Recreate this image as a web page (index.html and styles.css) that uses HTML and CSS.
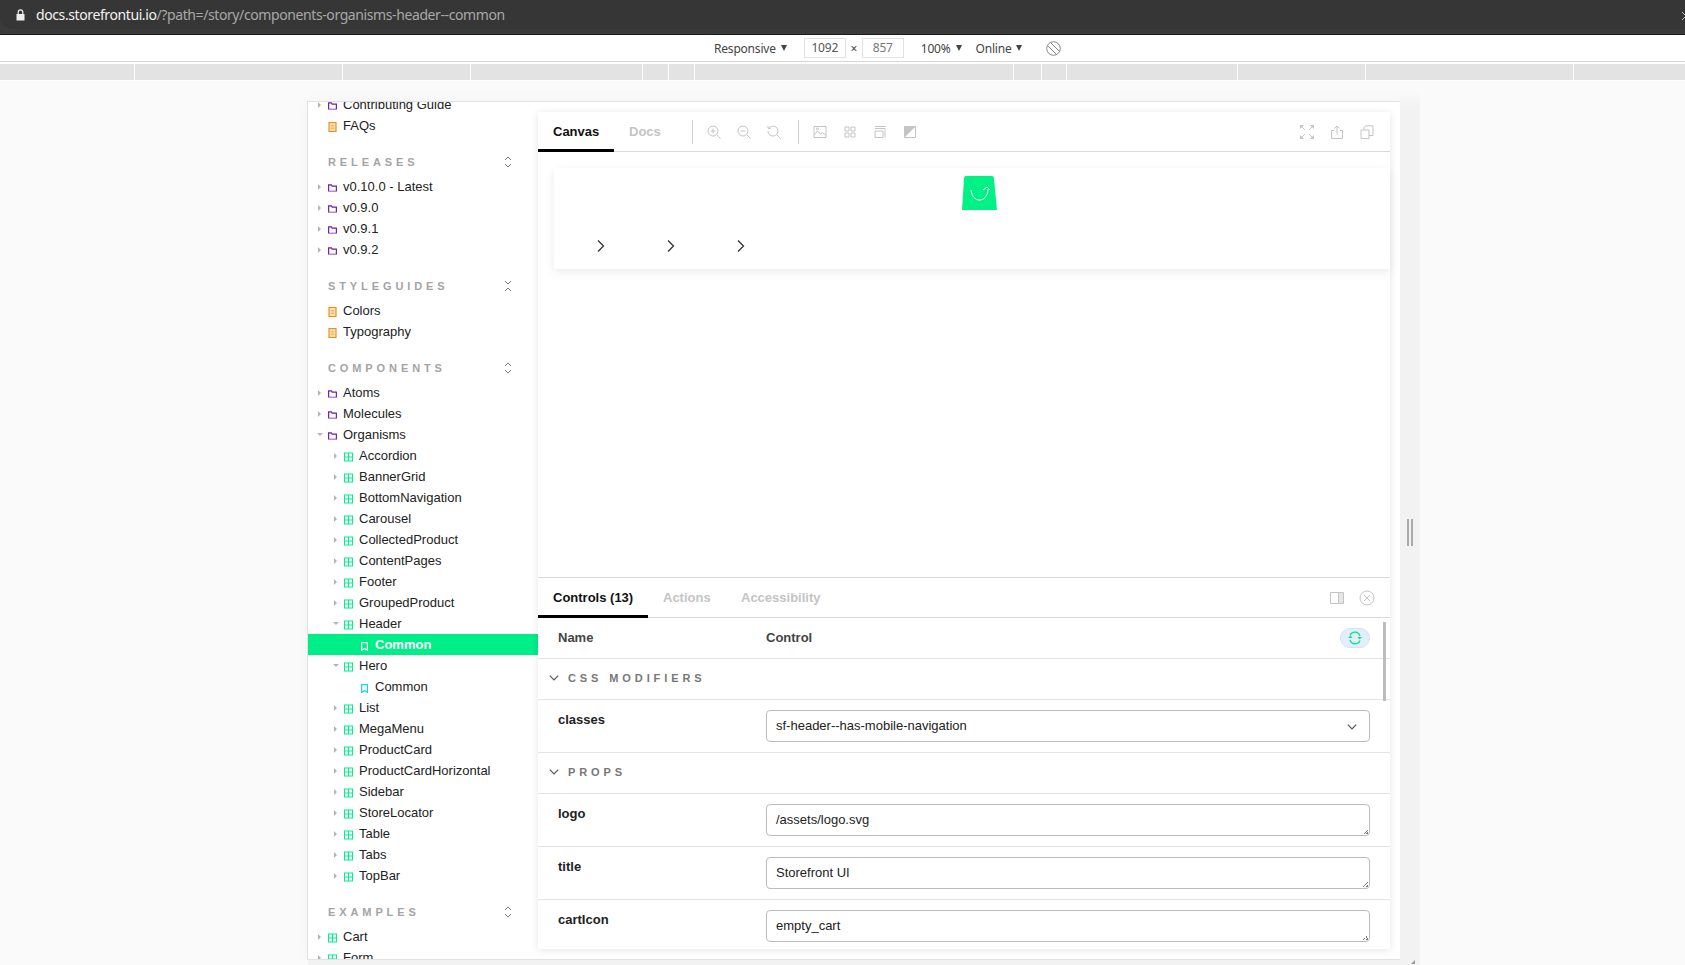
FILE: index.html
```html
<!DOCTYPE html>
<html lang="en">
<head>
    <meta charset="UTF-8">
    <title>Storefront UI docs</title>
    <link rel="stylesheet" href="styles.css">
</head>
<body>
    <svg class="sprites" width="0" height="0">
        <symbol id="i-folder" viewBox="0 0 10 9"><path d="M.7 1h3l1 1.4h4.6v5.9H.7z" fill="none" stroke="#6f1aa8" stroke-width="1.3"/><path d="M0 8h10v1H0z" fill="#c69fe0"/></symbol>
        <symbol id="i-doc" viewBox="0 0 9 11"><path d="M.7.7h7.600v9.600H.7z" fill="#fff" stroke="#fb8a0a" stroke-width="1.400"/><path d="M2.200 3.500h4.600M2.200 5.500h4.600M2.200 7.500h4.600" stroke="#fb8a0a"/></symbol>
        <symbol id="i-comp" viewBox="0 0 9 9"><path d="M.5.5h8v8h-8zM4.500.5v8M.5 4.500h8" fill="none" stroke="#00f08a" stroke-width="1.100"/></symbol>
        <symbol id="i-mark" viewBox="0 0 7 9"><path d="M.6.6h5.800v7.800L3.500 6.400.6 8.400z" fill="none" stroke="currentColor" stroke-width="1.200"/></symbol>
        <symbol id="i-updown" viewBox="0 0 8 12"><path d="M1 4l3-3 3 3M1 8l3 3 3-3" fill="none" stroke="#777" stroke-width="1"/></symbol>
        <symbol id="i-inward" viewBox="0 0 8 12"><path d="M1 1l3 3 3-3M1 11l3-3 3 3" fill="none" stroke="#777" stroke-width="1"/></symbol>
        <symbol id="i-chev" viewBox="0 0 8 5"><path d="M.5.5L4 4 7.5.5" fill="none" stroke="#555" stroke-width="1"/></symbol>
    </svg>

    <div class="browser-bar">
        <div class="address">
            <svg class="lock" width="9" height="12" viewBox="0 0 9 12"><path d="M2.200 5V3.200a2.300 2.300 0 0 1 4.600 0V5" fill="none" stroke="#eee" stroke-width="1.200"/><path d="M.5 5h8v6.500h-8z" fill="#eee"/></svg>
            <span class="host">docs.storefrontui.io</span><span class="path">/?path=/story/components-organisms-header--common</span>
            <svg class="edge-icon" width="3" height="8" viewBox="0 0 3 8"><path d="M0 0l3 3M0 8l3-3" stroke="#bbb" fill="none"/></svg>
        </div>
    </div>

    <div class="device-bar">
        <span class="device-opt">Responsive <i class="caret"></i></span>
        <span class="size-box">1092</span>
        <span class="times">×</span>
        <span class="size-box muted">857</span>
        <span class="device-opt zoom-opt">100% <i class="caret"></i></span>
        <span class="device-opt net-opt">Online <i class="caret"></i></span>
        <svg class="rotate" width="15" height="15" viewBox="0 0 15 15"><circle cx="7.500" cy="7.500" r="6.800" fill="none" stroke="#888"/><path d="M5 2l8 8M2 5l8 8" stroke="#888" fill="none" stroke-width="1"/></svg>
    </div>

    <div class="ruler">
        <span style="width:135px"></span><span style="width:208px"></span><span style="width:128px"></span><span style="width:172px"></span><span style="width:26px"></span><span style="width:26px"></span><span style="width:319px"></span><span style="width:28px"></span><span style="width:25px"></span><span style="width:171px"></span><span style="width:128px"></span><span style="width:208px"></span><span class="ruler-end"></span>
    </div>

    <div class="stage">
        <div class="frame">
            <nav class="sidebar">
                <ul class="tree first">
                    <li><i class="arrow"></i><svg class="ic"><use href="#i-folder"/></svg>Contributing Guide</li>
                    <li><i class="arrow none"></i><svg class="ic"><use href="#i-doc"/></svg>FAQs</li>
                </ul>

                <div class="section"><span>RELEASES</span><svg class="toggle"><use href="#i-updown"/></svg></div>
                <ul class="tree">
                    <li><i class="arrow"></i><svg class="ic"><use href="#i-folder"/></svg>v0.10.0 - Latest</li>
                    <li><i class="arrow"></i><svg class="ic"><use href="#i-folder"/></svg>v0.9.0</li>
                    <li><i class="arrow"></i><svg class="ic"><use href="#i-folder"/></svg>v0.9.1</li>
                    <li><i class="arrow"></i><svg class="ic"><use href="#i-folder"/></svg>v0.9.2</li>
                </ul>

                <div class="section"><span>STYLEGUIDES</span><svg class="toggle"><use href="#i-inward"/></svg></div>
                <ul class="tree">
                    <li><i class="arrow none"></i><svg class="ic"><use href="#i-doc"/></svg>Colors</li>
                    <li><i class="arrow none"></i><svg class="ic"><use href="#i-doc"/></svg>Typography</li>
                </ul>

                <div class="section"><span>COMPONENTS</span><svg class="toggle"><use href="#i-updown"/></svg></div>
                <ul class="tree">
                    <li><i class="arrow"></i><svg class="ic"><use href="#i-folder"/></svg>Atoms</li>
                    <li><i class="arrow"></i><svg class="ic"><use href="#i-folder"/></svg>Molecules</li>
                    <li><i class="arrow open"></i><svg class="ic"><use href="#i-folder"/></svg>Organisms</li>
                    <li class="sub"><i class="arrow"></i><svg class="ic"><use href="#i-comp"/></svg>Accordion</li>
                    <li class="sub"><i class="arrow"></i><svg class="ic"><use href="#i-comp"/></svg>BannerGrid</li>
                    <li class="sub"><i class="arrow"></i><svg class="ic"><use href="#i-comp"/></svg>BottomNavigation</li>
                    <li class="sub"><i class="arrow"></i><svg class="ic"><use href="#i-comp"/></svg>Carousel</li>
                    <li class="sub"><i class="arrow"></i><svg class="ic"><use href="#i-comp"/></svg>CollectedProduct</li>
                    <li class="sub"><i class="arrow"></i><svg class="ic"><use href="#i-comp"/></svg>ContentPages</li>
                    <li class="sub"><i class="arrow"></i><svg class="ic"><use href="#i-comp"/></svg>Footer</li>
                    <li class="sub"><i class="arrow"></i><svg class="ic"><use href="#i-comp"/></svg>GroupedProduct</li>
                    <li class="sub"><i class="arrow open"></i><svg class="ic"><use href="#i-comp"/></svg>Header</li>
                    <li class="story active"><svg class="ic mark"><use href="#i-mark"/></svg>Common</li>
                    <li class="sub"><i class="arrow open"></i><svg class="ic"><use href="#i-comp"/></svg>Hero</li>
                    <li class="story"><svg class="ic mark"><use href="#i-mark"/></svg>Common</li>
                    <li class="sub"><i class="arrow"></i><svg class="ic"><use href="#i-comp"/></svg>List</li>
                    <li class="sub"><i class="arrow"></i><svg class="ic"><use href="#i-comp"/></svg>MegaMenu</li>
                    <li class="sub"><i class="arrow"></i><svg class="ic"><use href="#i-comp"/></svg>ProductCard</li>
                    <li class="sub"><i class="arrow"></i><svg class="ic"><use href="#i-comp"/></svg>ProductCardHorizontal</li>
                    <li class="sub"><i class="arrow"></i><svg class="ic"><use href="#i-comp"/></svg>Sidebar</li>
                    <li class="sub"><i class="arrow"></i><svg class="ic"><use href="#i-comp"/></svg>StoreLocator</li>
                    <li class="sub"><i class="arrow"></i><svg class="ic"><use href="#i-comp"/></svg>Table</li>
                    <li class="sub"><i class="arrow"></i><svg class="ic"><use href="#i-comp"/></svg>Tabs</li>
                    <li class="sub"><i class="arrow"></i><svg class="ic"><use href="#i-comp"/></svg>TopBar</li>
                </ul>

                <div class="section"><span>EXAMPLES</span><svg class="toggle"><use href="#i-updown"/></svg></div>
                <ul class="tree">
                    <li><i class="arrow"></i><svg class="ic"><use href="#i-comp"/></svg>Cart</li>
                    <li><i class="arrow"></i><svg class="ic"><use href="#i-comp"/></svg>Form</li>
                </ul>
            </nav>

            <main class="main">
                <div class="toolbar">
                    <div class="tab active canvas-tab">Canvas</div>
                    <div class="tab docs-tab">Docs</div>
                    <i class="tool-sep"></i>
                    <svg class="tool" viewBox="0 0 14 14"><circle cx="6" cy="6" r="5" /><path d="M9.700 9.700L13.500 13.500M3.500 6h5M6 3.500v5"/></svg>
                    <svg class="tool" viewBox="0 0 14 14"><circle cx="6" cy="6" r="5" /><path d="M9.700 9.700L13.500 13.500M3.500 6h5"/></svg>
                    <svg class="tool" viewBox="0 0 14 14"><path d="M2.500 2.500A5 5 0 1 1 1 6M9.700 9.700l3.800 3.800M1 .8v2.500h2.800"/></svg>
                    <i class="tool-sep second"></i>
                    <svg class="tool" viewBox="0 0 14 14"><path d="M1 1.500h12v11H1zM1 10l3.500-4 3 3 2-1.500 3.500 3"/><circle cx="4.500" cy="4" r="1"/></svg>
                    <svg class="tool" viewBox="0 0 14 14"><path d="M2 2h4v4H2zM8 2h4v4H8zM2 8h4v4H2zM8 8h4v4H8z"/></svg>
                    <svg class="tool" viewBox="0 0 14 14"><path d="M2 6h8v6.500H2zM2 3.500h10v9M2 1.500h11"/></svg>
                    <svg class="tool" viewBox="0 0 14 14"><path d="M1.500 1.500h11v11h-11z"/><path d="M1.500 12.500V1.500h11z" class="solid"/></svg>
                    <div class="tool-right">
                        <svg class="tool" viewBox="0 0 14 14"><path d="M1 1l4 4M13 1L9 5M1 13l4-4M13 13L9 9"/><path class="solid" d="M0 0h4L0 4zM14 0v4l-4-4zM0 14v-4l4 4zM14 14h-4l4-4z"/></svg>
                        <svg class="tool" viewBox="0 0 14 14"><path d="M4 5.500H1.500v8h11v-8H10M7 9.500V1M4.500 3.500L7 1l2.500 2.500"/></svg>
                        <svg class="tool" viewBox="0 0 14 14"><path d="M1 5h8v8.500H1zM4 5V2.500L6 .8h7v9.700H9"/></svg>
                    </div>
                </div>

                <div class="preview">
                    <div class="story-card">
                        <div class="bag">
                            <svg width="35" height="34" viewBox="0 0 35 34"><path d="M4 0h26q2 0 2 3l3 31H0L2 3q0-3 2-3z" fill="#00f286"/><path d="M9 14a8 10 0 0 0 17-1M21 14l4-3 3 3" fill="none" stroke="#fff" stroke-width="1"/></svg>
                        </div>
                        <div class="crumbs">
                            <svg width="8" height="12" viewBox="0 0 8 12"><path d="M1 .5L6.500 6 1 11.500" fill="none" stroke="#333" stroke-width="1.300"/></svg>
                            <svg width="8" height="12" viewBox="0 0 8 12"><path d="M1 .5L6.500 6 1 11.500" fill="none" stroke="#333" stroke-width="1.300"/></svg>
                            <svg width="8" height="12" viewBox="0 0 8 12"><path d="M1 .5L6.500 6 1 11.500" fill="none" stroke="#333" stroke-width="1.300"/></svg>
                        </div>
                    </div>
                </div>

                <div class="addons">
                    <div class="toolbar addon-tabs">
                        <div class="tab active controls-tab">Controls (13)</div>
                        <div class="tab actions-tab">Actions</div>
                        <div class="tab">Accessibility</div>
                        <div class="tool-right">
                            <svg class="tool" viewBox="0 0 14 14"><path d="M.5 1.500h13v11H.5zM8.500 1.500v11"/><path class="light" d="M9 2h4v10H9z"/></svg>
                            <svg class="tool close" viewBox="0 0 16 16"><circle cx="8" cy="8" r="7"/><path d="M5 5l6 6M11 5l-6 6"/></svg>
                        </div>
                    </div>

                    <div class="scrollbar"></div>

                    <div class="row head-row">
                        <div class="col-name">Name</div>
                        <div class="col-control">Control</div>
                        <div class="reset">
                            <svg width="14" height="14" viewBox="0 0 14 14"><path d="M12 5a5.300 5.300 0 0 0-10-.5M2 9a5.300 5.300 0 0 0 10 .5" fill="none" stroke="#00e884" stroke-width="1.300"/><path d="M0 7l2.500-2.500L4.500 7zM14 6l-2.500 2.500L9.500 6z" fill="#00e884"/></svg>
                        </div>
                    </div>

                    <div class="row group-row"><svg class="chev"><use href="#i-chev"/></svg><span class="group-title">CSS MODIFIERS</span></div>

                    <div class="row control-row">
                        <div class="col-name prop">classes</div>
                        <div class="select">sf-header--has-mobile-navigation<svg class="chev select-chev"><use href="#i-chev"/></svg></div>
                    </div>

                    <div class="row group-row"><svg class="chev"><use href="#i-chev"/></svg><span class="group-title">PROPS</span></div>

                    <div class="row control-row">
                        <div class="col-name prop">logo</div>
                        <div class="textarea">/assets/logo.svg</div>
                    </div>
                    <div class="row control-row">
                        <div class="col-name prop">title</div>
                        <div class="textarea">Storefront UI</div>
                    </div>
                    <div class="row control-row last">
                        <div class="col-name prop">cartIcon</div>
                        <div class="textarea">empty_cart</div>
                    </div>
                </div>
            </main>
        </div>

        <div class="resizer"><i></i><i></i></div>
        <svg class="corner" width="4" height="4" viewBox="0 0 4 4"><path d="M4 0v4H0z" fill="#999"/></svg>
    </div>
</body>
</html>
```

FILE: styles.css
```css
* {
    box-sizing: border-box;
}
html, body {
    margin: 0;
    height: 100%;
    overflow: hidden;
}
body {
    width: 1685px;
    height: 965px;
    font-family: "Liberation Sans", Arial, sans-serif;
    font-size: 13px;
    color: #333;
    background-color: #fafafa;
}
.sprites {
    position: absolute;
}
ul {
    list-style: none;
    margin: 0;
    padding: 0;
}

/* browser chrome */
.browser-bar {
    height: 35px;
    background-color: #3a3a3a;
    border-bottom: 1px solid #1c1c1c;
}
.address {
    height: 29px;
    display: flex;
    align-items: center;
    padding-left: 16px;
    background-color: #363636;
    border-radius: 0 0 0 14px;
    font-family: "Noto Sans", sans-serif;
    font-size: 14px;
    letter-spacing: -0.4px;
    white-space: nowrap;
}
.lock {
    margin-right: 11px;
}
.host {
    color: #f2f2f2;
}
.path {
    color: #a8a8a8;
}
.edge-icon {
    margin-left: auto;
    margin-top: 3px;
}

.device-bar {
    height: 27px;
    background-color: #fff;
    border-bottom: 1px solid #d6d6d6;
    display: flex;
    align-items: center;
    padding-left: 714px;
    font-family: "Noto Sans", sans-serif;
    font-size: 12px;
    letter-spacing: -0.2px;
    color: #444;
}
.device-opt {
    display: flex;
    align-items: center;
    white-space: nowrap;
}
.caret {
    width: 0;
    height: 0;
    margin-left: 5px;
    border-left: 3.5px solid transparent;
    border-right: 3.5px solid transparent;
    border-top: 6px solid #444;
}
.size-box {
    width: 42px;
    height: 20px;
    margin-left: 17px;
    border: 1px solid #e2e2e2;
    text-align: center;
    line-height: 18px;
    color: #555;
}
.size-box.muted {
    margin-left: 0;
    color: #777;
}
.times {
    width: 16px;
    text-align: center;
    color: #444;
}
.zoom-opt {
    margin-left: 17px;
}
.net-opt {
    margin-left: 14px;
}
.rotate {
    margin-left: 24px;
}

.ruler {
    height: 19px;
    padding: 2px 0 1px;
    display: flex;
    background-color: #fff;
}
.ruler span {
    height: 16px;
    background-color: #e3e3e3;
    border-right: 1px solid #fff;
    flex: none;
}
.ruler .ruler-end {
    flex: 1;
    border-right: 0;
}

/* stage with the device frame */
.stage {
    position: relative;
    height: 884px;
    padding: 21px 0 0 308px;
    display: flex;
    align-items: flex-start;
    background-color: #fafafa;
}
.frame {
    width: 1092px;
    height: 857px;
    flex: none;
    display: flex;
    background-color: #fff;
    overflow: hidden;
    box-shadow: 0 0 0 1px #e2e2e2, 0 6px 0 #f2f2f2, 0 0 14px rgba(0,0,0,0.04);
}
.resizer {
    width: 20px;
    height: 875px;
    margin-top: -11px;
    flex: none;
    display: flex;
    gap: 2px;
    justify-content: center;
    align-items: center;
    background: linear-gradient(#fafafa, #f2f2f2 16px);
}
.resizer i {
    width: 2px;
    height: 27px;
    margin-top: 7px;
    background-color: #aaa;
}
.corner {
    position: absolute;
    left: 1411px;
    bottom: 1px;
}

/* sidebar */
.sidebar {
    width: 230px;
    flex: none;
    color: #222;
}
.tree li {
    height: 21px;
    line-height: 21px;
    display: flex;
    align-items: center;
    padding-left: 9px;
    white-space: nowrap;
}
.tree.first {
    margin-top: -8px;
}
.arrow {
    width: 0;
    height: 0;
    margin-right: 5px;
    margin-left: 1px;
    border-top: 3px solid transparent;
    border-bottom: 3px solid transparent;
    border-left: 3px solid #b4b4b4;
    flex: none;
}
.arrow.none {
    border-left-color: transparent;
}
.arrow.open {
    margin-left: 0;
    margin-right: 3px;
    border-left: 3px solid transparent;
    border-right: 3px solid transparent;
    border-top: 3px solid #b4b4b4;
    border-bottom: 0;
}
.ic {
    width: 9px;
    height: 10px;
    margin: 2px 6px 0 2px;
    flex: none;
}
.tree .sub {
    padding-left: 25px;
}
.tree .story {
    padding-left: 53px;
}
.ic.mark {
    width: 7px;
    height: 9px;
    margin: 4px 7px 0 0;
    color: #14d6f0;
}
.story.active {
    background-color: #00ee88;
    color: #fff;
    font-weight: bold;
}
.story.active .mark {
    color: #fff;
}
.section {
    width: 204px;
    height: 40px;
    padding: 11px 0 0 20px;
    display: flex;
    align-items: center;
    justify-content: space-between;
    font-size: 11px;
    font-weight: bold;
    letter-spacing: 3.9px;
    color: #a4a4a4;
}
.toggle {
    width: 8px;
    height: 12px;
    flex: none;
}

/* canvas side */
.main {
    width: 852px;
    height: 837px;
    margin-top: 10px;
    flex: none;
    display: flex;
    flex-direction: column;
    background-color: #fff;
    box-shadow: 0 1px 8px rgba(0,0,0,0.1);
}
.toolbar {
    height: 40px;
    flex: none;
    display: flex;
    align-items: center;
    border-bottom: 1px solid #d9d9d9;
}
.tab {
    height: 40px;
    padding: 0 15px;
    line-height: 40px;
    font-weight: bold;
    color: #c4c4c4;
    border-bottom: 3px solid transparent;
    white-space: nowrap;
}
.tab.active {
    color: #111;
    border-bottom-color: #000;
}
.canvas-tab {
    width: 76px;
}
.docs-tab {
    width: 78px;
}
.tool-sep {
    width: 1px;
    height: 24px;
    margin-right: 6px;
    background-color: #d0d0d0;
}
.tool-sep.second {
    margin-left: 9px;
}
.tool {
    width: 14px;
    height: 14px;
    margin: 1px 8px 0;
    fill: none;
    stroke: #c4c4c4;
    stroke-width: 1;
    flex: none;
}
.tool .solid {
    fill: #c4c4c4;
    stroke: none;
}
.tool .light {
    fill: #e6e6e6;
    stroke: none;
}
.tool-right {
    margin-left: auto;
    display: flex;
    align-items: center;
    padding-right: 8px;
}
.tool.close {
    width: 16px;
    height: 16px;
    margin-left: 7px;
}

.preview {
    height: 425px;
    flex: none;
    padding: 16px 0 0 16px;
}
.story-card {
    height: 101px;
    padding-top: 8px;
    background-color: #fff;
    box-shadow: 0 3px 10px rgba(0,0,0,0.08);
}
.bag {
    display: flex;
    justify-content: center;
    margin-left: 15px;
}
.crumbs {
    display: flex;
    gap: 62px;
    padding: 30px 0 0 43px;
}

.addons {
    position: relative;
    flex: 1;
    min-height: 0;
    border-top: 1px solid #d9d9d9;
}
.addon-tabs {
    height: 40px;
}
.controls-tab {
    width: 110px;
    padding-right: 0;
}
.actions-tab {
    width: 78px;
}
.addon-tabs .tool-right {
    padding-right: 7px;
}
.scrollbar {
    position: absolute;
    right: 4px;
    top: 44px;
    width: 3px;
    height: 79px;
    background-color: #bdbdbd;
}
.row {
    display: flex;
    padding: 0 20px;
    border-bottom: 1px solid #e4e4e4;
    font-size: 13px;
}
.col-name {
    width: 208px;
    flex: none;
    font-weight: bold;
}
.head-row {
    height: 41px;
    align-items: center;
    color: #444;
}
.head-row .col-name, .col-control {
    margin-top: -2px;
}
.col-control {
    flex: 1;
    font-weight: bold;
}
.reset {
    width: 30px;
    height: 20px;
    border-radius: 10px;
    background-color: #e4eefb;
    border: 1px solid #d6e2f2;
    display: flex;
    align-items: center;
    justify-content: center;
}
.group-row {
    height: 41px;
    align-items: center;
    padding: 0 0 2px 11px;
}
.chev {
    width: 10px;
    height: 6px;
    flex: none;
}
.group-title {
    margin-left: 9px;
    font-size: 11px;
    font-weight: bold;
    letter-spacing: 3.9px;
    color: #777;
    white-space: nowrap;
}
.control-row {
    height: 53px;
    padding-top: 10px;
}
.control-row.last {
    border-bottom: 0;
    height: 50px;
}
.prop {
    padding-top: 2px;
    color: #222;
}
.select, .textarea {
    position: relative;
    width: 604px;
    height: 32px;
    flex: none;
    padding: 0 9px;
    line-height: 30px;
    border: 1px solid #bbb;
    border-radius: 4px;
    color: #222;
}
.select-chev {
    position: absolute;
    right: 12px;
    top: 13px;
}
.textarea::after {
    content: "";
    position: absolute;
    right: 1px;
    bottom: 1px;
    width: 5px;
    height: 5px;
    background: linear-gradient(135deg, transparent 50%, #777 50%, #777 60%, transparent 60%, transparent 75%, #777 75%);
}
```
